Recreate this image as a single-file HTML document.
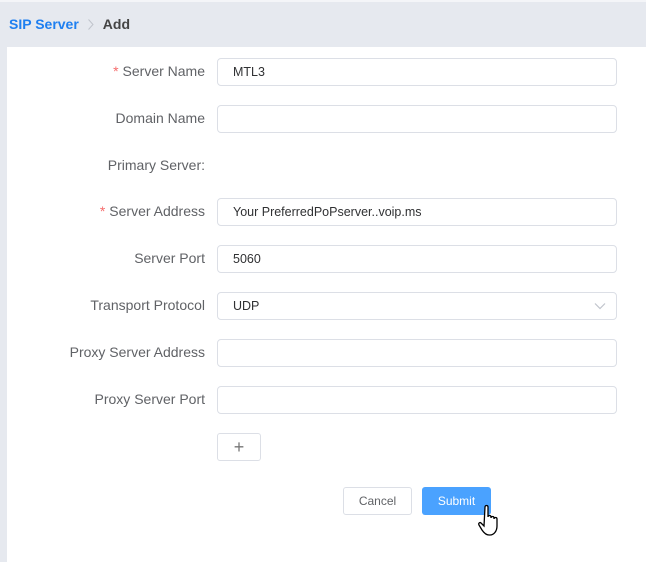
<!DOCTYPE html><html><head><style>
body{margin:0;width:646px;height:562px;background:#e6e9ef;font-family:"Liberation Sans",sans-serif;position:relative;overflow:hidden}
.top{position:absolute;left:0;top:0;width:646px;height:2px;background:#f4f5f8}
.bc{position:absolute;left:9px;top:16px;font-size:14px;font-weight:bold;color:#1e7ff0}
.bc .cur{color:#444}
.panel{position:absolute;left:7px;top:47px;width:639px;height:515px;background:#fff}
.lb{position:absolute;right:441px;font-size:14px;color:#606266;white-space:nowrap}
.lb i{color:#f56c6c;font-style:normal;margin-right:4px}
.in{position:absolute;left:217px;height:26px;border:1px solid #dcdfe6;border-radius:4px;font-size:12.5px;color:#303133;line-height:26px;padding-left:15px;width:383px}
.btn{position:absolute;box-sizing:border-box;border-radius:3px;font-size:12px;text-align:center;line-height:26px}
</style></head><body>
<div class="top"></div>
<div class="bc">SIP Server<svg style="margin:0 9px;vertical-align:-1px" width="6" height="11" viewBox="0 0 6 11"><path d="M0.5 0.5L5 5.5L0.5 10.5" fill="none" stroke="#c0c4cc" stroke-width="1"/></svg><span class="cur">Add</span></div>
<div class="panel"></div>
<div class="lb" style="top:63px"><i>*</i>Server Name</div><div class="in" style="top:58px">MTL3</div>
<div class="lb" style="top:110px">Domain Name</div><div class="in" style="top:105px"></div>
<div class="lb" style="top:157px">Primary Server:</div>
<div class="lb" style="top:203px"><i>*</i>Server Address</div><div class="in" style="top:198px">Your PreferredPoPserver..voip.ms</div>
<div class="lb" style="top:250px">Server Port</div><div class="in" style="top:245px">5060</div>
<div class="lb" style="top:297px">Transport Protocol</div><div class="in" style="top:292px">UDP<svg style="position:absolute;right:10px;top:9px" width="12" height="8" viewBox="0 0 12 8"><path d="M1 1.5L6 6.5L11 1.5" fill="none" stroke="#c0c4cc" stroke-width="1.2"/></svg></div>
<div class="lb" style="top:344px">Proxy Server Address</div><div class="in" style="top:339px"></div>
<div class="lb" style="top:391px">Proxy Server Port</div><div class="in" style="top:386px"></div>
<div class="btn" style="left:217px;top:433px;width:44px;height:28px;border:1px solid #dcdfe6;color:#777;font-size:18px">+</div>
<div class="btn" style="left:343px;top:487px;width:69px;height:28px;border:1px solid #dcdfe6;color:#606266">Cancel</div>
<div class="btn" style="left:422px;top:487px;width:69px;height:28px;background:#4aa2ff;color:#fff;line-height:28px">Submit</div>
<svg style="position:absolute;left:478px;top:504px" width="26" height="34" viewBox="0 0 26 34"><path d="M7 3c0-2 3-2 3 0v10c0-2 3-2 3 0v1c0-2 3-2 3 0v1c0-2 3-2 3 0v7c0 5-3 9-7 9h-1c-3 0-5-2-7-5l-3-5c-1-2 1-3 2-2l3 3z" fill="#fff" stroke="#000" stroke-width="1.3"/></svg>
</body></html>
